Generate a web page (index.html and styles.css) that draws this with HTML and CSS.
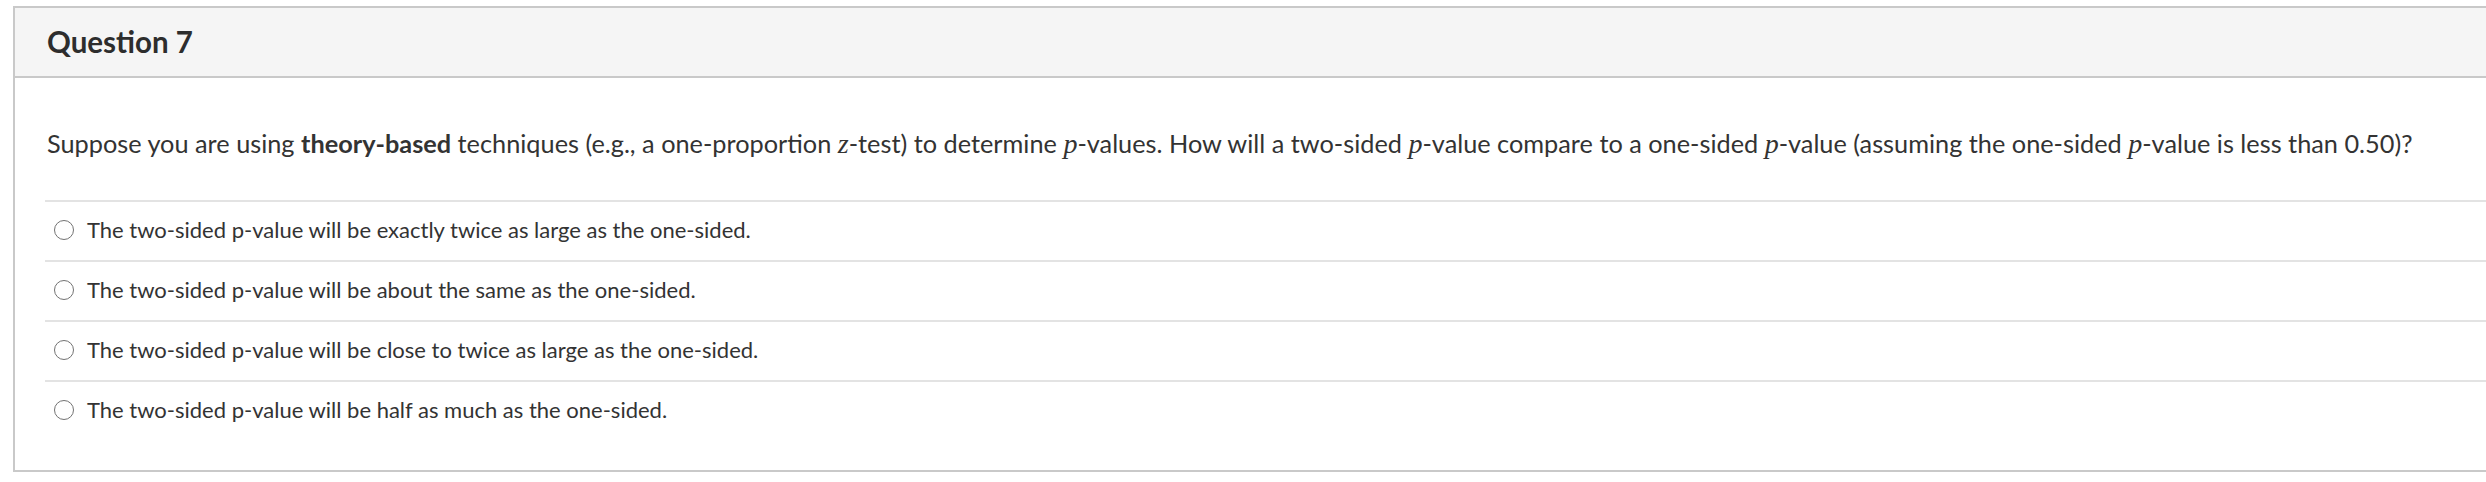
FILE: index.html
```html
<!DOCTYPE html>
<html lang="en">
<head>
<meta charset="utf-8">
<title>Question 7</title>
<link rel="stylesheet" href="styles.css">
</head>
<body>
<div class="question">
  <div class="header">
    <h2 class="title">Question 7</h2>
  </div>
  <div class="content">
    <p class="prompt">Suppose you are using <strong>theory-based</strong> techniques (e.g., a one-proportion <span class="math">z</span>-test) to determine <span class="math">p</span>-values. How will a two-sided <span class="math">p</span>-value compare to a one-sided <span class="math">p</span>-value (assuming the one-sided <span class="math">p</span>-value is less than 0.50)?</p>
    <div class="answers">
      <label class="answer"><input type="radio" name="q7" class="radio"><span>The two-sided p-value will be exactly twice as large as the one-sided.</span></label>
      <label class="answer"><input type="radio" name="q7" class="radio"><span>The two-sided p-value will be about the same as the one-sided.</span></label>
      <label class="answer"><input type="radio" name="q7" class="radio"><span>The two-sided p-value will be close to twice as large as the one-sided.</span></label>
      <label class="answer"><input type="radio" name="q7" class="radio"><span>The two-sided p-value will be half as much as the one-sided.</span></label>
    </div>
  </div>
</div>
</body>
</html>
```

FILE: styles.css
```css
html, body {
  margin: 0;
  padding: 0;
  overflow: hidden;
  background: #ffffff;
}

body {
  font-family: Lato, "Open Sans", "Liberation Sans", sans-serif;
  color: #333333;
}

.question {
  margin: 6px -40px 0 13px;
  border: 2px solid #c9c9c9;
  background: #ffffff;
}

.header {
  background: #f5f5f5;
  border-bottom: 2px solid #c9c9c9;
  height: 68px;
  display: flex;
  align-items: center;
  padding-left: 32px;
}

.title {
  margin: 0;
  font-size: 29.5px;
  font-weight: 700;
  color: #2d2d2d;
  line-height: 1;
}

.content {
  padding: 0 0 30px 30px;
}

.prompt {
  margin: 0;
  padding: 47px 0 38px 2px;
  font-size: 25.3px;
  line-height: 37px;
  white-space: nowrap;
}

.prompt strong {
  font-weight: 700;
}

.math {
  font-family: "Liberation Serif", "DejaVu Serif", serif;
  font-style: italic;
  font-size: 28px;
}

.answers {
  display: flex;
  flex-direction: column;
}

.answer {
  display: flex;
  align-items: center;
  gap: 13px;
  border-top: 2px solid #e3e3e3;
  padding: 12px 0 14px 9px;
  font-size: 22px;
  line-height: 32px;
  cursor: pointer;
}

.radio {
  appearance: none;
  -webkit-appearance: none;
  margin: 0;
  width: 20px;
  height: 20px;
  border: 1.5px solid #727272;
  border-radius: 50%;
  background: #ffffff;
  flex: none;
}
```
